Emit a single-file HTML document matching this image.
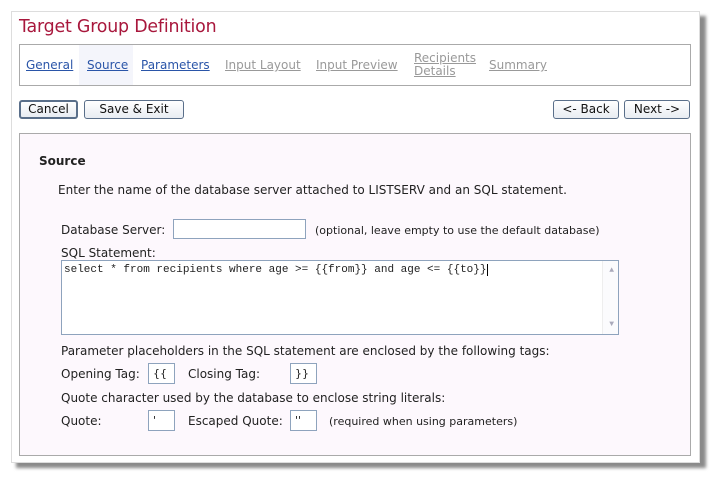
<!DOCTYPE html>
<html><head><meta charset="utf-8"><style>
*{margin:0;padding:0;box-sizing:border-box}
body{width:716px;height:483px;background:#fff;position:relative;overflow:hidden;font-family:"DejaVu Sans","Liberation Sans",sans-serif;font-size:12px;color:#222}
.a{position:absolute}
.shadow{left:16px;top:16px;width:690px;height:452px;background:#8a8a8a;filter:blur(1.5px)}
.page{left:11px;top:11px;width:689px;height:452px;background:#fff;border:1px solid #ddd}
.title{left:19px;top:17px;font-size:17.4px;color:#a8173c;font-family:"DejaVu Sans",sans-serif;letter-spacing:-0.2px}
.tabs{left:19px;top:44px;width:672px;height:42px;border:1px solid #aaa;background:#fff}
.tab{position:absolute;font-size:12px;text-decoration:underline;color:#2a55a8;top:13px}
.dis{color:#999}
.btn{position:absolute;top:100px;height:19px;border:1px solid #5a6f8a;border-radius:3px;background:linear-gradient(#fff,#e8ecf2);font-size:12px;text-align:center;line-height:17px;color:#111}
.box{left:19px;top:133px;width:672px;height:323px;border:1px solid #aaa;background:#fdf8fd}
.in{position:absolute;border:1px solid #8ea3bd;background:#fff;font-size:11px;line-height:19px;padding-left:4px}
.t{position:absolute;white-space:nowrap}
</style></head><body>
<div class="a shadow"></div>
<div class="a page"></div>
<div class="a title">Target Group Definition</div>
<div class="a tabs">
 <div style="position:absolute;left:59px;top:0;width:54px;height:40px;background:#f4f5fb"></div>
 <span class="tab" style="left:6px">General</span>
 <span class="tab" style="left:67px">Source</span>
 <span class="tab" style="left:121px">Parameters</span>
 <span class="tab dis" style="left:205px">Input Layout</span>
 <span class="tab dis" style="left:296px">Input Preview</span>
 <span class="tab dis" style="left:394px;top:7px;line-height:13px">Recipients<br>Details</span>
 <span class="tab dis" style="left:469px">Summary</span>
</div>
<div class="btn" style="left:19px;width:59px;border-width:2px;line-height:15px">Cancel</div>
<div class="btn" style="left:84px;width:100px">Save &amp; Exit</div>
<div class="btn" style="left:553px;width:66px">&lt;- Back</div>
<div class="btn" style="left:624px;width:66px">Next -&gt;</div>
<div class="a box"></div>
<div class="t" style="left:39px;top:154px;font-weight:bold;font-size:12px">Source</div>
<div class="t" style="left:58px;top:183px">Enter the name of the database server attached to LISTSERV and an SQL statement.</div>
<div class="t" style="left:61px;top:223px">Database Server:</div>
<div class="in" style="left:173px;top:219px;width:133px;height:20px"></div>
<div class="t" style="left:315px;top:224px;font-size:11px">(optional, leave empty to use the default database)</div>
<div class="t" style="left:61px;top:246px">SQL Statement:</div>
<div class="in" style="left:61px;top:260px;width:558px;height:75px;font-family:'Liberation Mono',monospace;font-size:11px;line-height:18px;padding-left:2px">select * from recipients where age &gt;= {{from}} and age &lt;= {{to}}<span style="border-left:1px solid #000;margin-left:1px"></span>
 <div style="position:absolute;right:0;top:0;width:16px;height:73px;background:#fbfbfd;border-left:1px solid #eee"></div>
 <div style="position:absolute;right:4px;top:6px;color:#aab;font-size:8px;line-height:8px">&#9650;</div>
 <div style="position:absolute;right:4px;top:60px;color:#aab;font-size:8px;line-height:8px">&#9660;</div>
</div>
<div class="t" style="left:61px;top:344px">Parameter placeholders in the SQL statement are enclosed by the following tags:</div>
<div class="t" style="left:61px;top:367px">Opening Tag:</div>
<div class="in" style="left:148px;top:363px;width:27px;height:21px">{{</div>
<div class="t" style="left:188px;top:367px">Closing Tag:</div>
<div class="in" style="left:290px;top:363px;width:27px;height:21px">}}</div>
<div class="t" style="left:61px;top:391px">Quote character used by the database to enclose string literals:</div>
<div class="t" style="left:61px;top:414px">Quote:</div>
<div class="in" style="left:148px;top:410px;width:27px;height:21px">'</div>
<div class="t" style="left:188px;top:414px">Escaped Quote:</div>
<div class="in" style="left:290px;top:410px;width:27px;height:21px">''</div>
<div class="t" style="left:329px;top:415px;font-size:11px">(required when using parameters)</div>
</body></html>
